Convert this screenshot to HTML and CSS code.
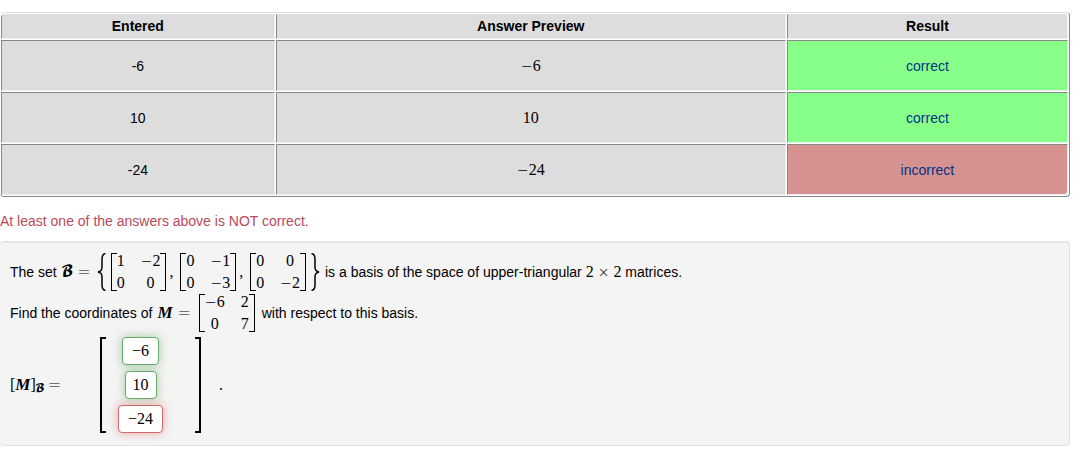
FILE: index.html
```html
<!DOCTYPE html>
<html lang="en">
<head>
  <meta charset="utf-8" />
  <meta name="viewport" content="width=device-width" />
  <title>Homework Problem</title>
  <link rel="stylesheet" href="styles.css">
</head>

<body>
  <table class="results">
    <thead>
      <tr>
        <th class="col-entered">Entered</th>
        <th class="col-preview">Answer Preview</th>
        <th>Result</th>
      </tr>
    </thead>
    <tbody>
      <tr>
        <td>-6</td>
        <td><span class="math"><span class="op">−</span>6</span></td>
        <td class="correct"><a href="#answer-1">correct</a></td>
      </tr>
      <tr>
        <td>10</td>
        <td><span class="math">10</span></td>
        <td class="correct"><a href="#answer-2">correct</a></td>
      </tr>
      <tr>
        <td>-24</td>
        <td><span class="math"><span class="op">−</span>24</span></td>
        <td class="incorrect"><a href="#answer-3">incorrect</a></td>
      </tr>
    </tbody>
  </table>

  <p class="message">At least one of the answers above is NOT correct.</p>

  <form class="problem">
    <div class="line">
      <span>The set</span>
      <span class="script">𝓑</span>
      <span class="op relation">=</span>
      <span class="set">
        <svg class="brace" viewBox="0 0 9 38" aria-hidden="true"><path d="M8.5 .5C5.5 1 5 3 5 6V14C5 17 4 18.500 1 19C4 19.500 5 21 5 24V32C5 35 5.500 37 8.500 37.500"/></svg>
        <span class="matrix math">
          <span class="cells">
            <span>1</span><span><span class="op">−</span>2</span>
            <span>0</span><span>0</span>
          </span>
        </span>
        <span class="math comma">,</span>
        <span class="matrix math">
          <span class="cells">
            <span>0</span><span><span class="op">−</span>1</span>
            <span>0</span><span><span class="op">−</span>3</span>
          </span>
        </span>
        <span class="math comma">,</span>
        <span class="matrix math">
          <span class="cells">
            <span>0</span><span>0</span>
            <span>0</span><span><span class="op">−</span>2</span>
          </span>
        </span>
        <svg class="brace" viewBox="0 0 9 38" aria-hidden="true"><path d="M.5 .5C3.500 1 4 3 4 6V14C4 17 5 18.500 8 19C5 19.500 4 21 4 24V32C4 35 3.500 37 .5 37.500"/></svg>
      </span>
      <span>is a basis of the space of upper-triangular <span class="math">2 <span class="op">×</span> 2</span> matrices.</span>
    </div>

    <div class="line">
      <span>Find the coordinates of</span>
      <span class="math variable">M</span>
      <span class="op relation">=</span>
      <span class="matrix math">
        <span class="cells">
          <span><span class="op">−</span>6</span><span>2</span>
          <span>0</span><span>7</span>
        </span>
      </span>
      <span>with respect to this basis.</span>
    </div>

    <div class="answer">
      <div class="answer-label math">[<span class="variable">M</span>]<sub class="script">𝓑</sub> <span class="op relation">=</span></div>
      <div class="matrix answer-matrix">
        <div class="fields">
          <input id="answer-1" class="field field-1 is-correct" type="text" value="−6" aria-label="answer 1">
          <input id="answer-2" class="field field-2 is-correct" type="text" value="10" aria-label="answer 2">
          <input id="answer-3" class="field field-3 is-incorrect" type="text" value="−24" aria-label="answer 3">
        </div>
      </div>
      <span class="math">.</span>
    </div>
  </form>
</body>
</html>
```
FILE: styles.css
```css
*,
*::before,
*::after {
  box-sizing: border-box;
}

body {
  margin: 0;
  padding: 12px 22px 10px 0;
  background-color: white;
  color: black;
  font-family: "Liberation Sans", Arial, sans-serif;
  font-size: 14px;
  line-height: 20px;
}

/* Results table */
.results {
  width: 100%;
  table-layout: fixed;
  border: 1px solid #888;
  border-top-color: #ddd;
  border-left: none;
  border-radius: 4px;
  border-collapse: separate;
  border-spacing: 1px;
  text-align: center;
}

.results th,
.results td {
  padding: 0;
  background-color: #ddd;
  border: 1px solid #eee;
  border-top-color: #888;
  border-left-color: #888;
}

.results th {
  height: 25px;
  padding-bottom: 1px;
  border-top-color: #ddd;
}

.results td {
  height: 51px;
}

.results .col-entered {
  width: 25.7%;
}

.results .col-preview {
  width: 47.9%;
}

.results .correct {
  background-color: #8f8;
}

.results .incorrect {
  background-color: #d69191;
}

.results th:first-child {
  border-top-left-radius: 4px;
}

.results th:last-child {
  border-top-right-radius: 4px;
}

.results tr:last-child td:last-child {
  border-bottom-right-radius: 4px;
}

.results a {
  color: #038;
  text-decoration: none;
}

.message {
  margin: 14px 0 10px;
  color: #b94a5a;
}

/* Problem text */
.problem {
  display: flex;
  flex-direction: column;
  gap: 3px;
  padding: 11px 10px 12px;
  background-color: #f4f4f4;
  border: 1px solid #e3e3e3;
  border-left: none;
  border-radius: 4px;
  box-shadow: inset 0 1px 1px rgba(0, 0, 0, 0.05);
}

.line,
.set {
  display: flex;
  align-items: center;
  gap: 5px;
}

.math {
  font-family: "Liberation Serif", "Times New Roman", serif;
  font-size: 16px;
}

.op {
  font-family: "DejaVu Sans", sans-serif;
  font-size: 14px;
  font-weight: 200;
}

.relation {
  margin-right: 1px;
  font-size: 16px;
}

.variable {
  font-size: 17px;
  font-style: italic;
  font-weight: bold;
}

.script {
  margin: 0 -1px;
  font-family: "DejaVu Math TeX Gyre", "DejaVu Serif", serif;
  font-size: 14px;
  line-height: 20px;
}

.comma {
  margin: 0 2px 0 -2px;
}

/* Square brackets stand on both sides of the cells */
.matrix {
  display: flex;
  height: 38px;
}

.matrix::before,
.matrix::after {
  content: "";
  width: 6px;
  border: 1px solid black;
}

.matrix::before {
  border-right: none;
}

.matrix::after {
  border-left: none;
}

.cells {
  display: grid;
  grid-template-columns: auto auto;
  column-gap: 16px;
  align-content: space-between;
  justify-items: center;
  line-height: 16px;
}

.line > .matrix {
  margin: 0 2px;
}

.brace {
  width: 9px;
  height: 38px;
  fill: none;
  stroke: black;
  stroke-width: 1.5;
}

/* Answer column */
.answer {
  display: flex;
  align-items: center;
  gap: 18px;
  margin-top: 2px;
}

.answer-label {
  width: 72px;
}

.answer-label sub {
  font-size: 11px;
  line-height: 0;
  vertical-align: -2px;
}

.answer-matrix {
  height: auto;
}

.answer-matrix::before,
.answer-matrix::after {
  border-width: 2px;
}

.fields {
  display: flex;
  flex-direction: column;
  align-items: center;
  gap: 6px;
  padding: 0 32px 0 12px;
}

.field {
  height: 28px;
  padding: 0;
  background-color: white;
  border: 1px solid;
  border-radius: 4px;
  font-family: "Liberation Serif", "Times New Roman", serif;
  font-size: 16px;
  text-align: center;
}

.field-1 {
  width: 37px;
}

.field-2 {
  width: 32px;
}

.field-3 {
  width: 45px;
}

.is-correct {
  border-color: #6aa86f;
  box-shadow: 0 0 10px rgba(81, 163, 81, 0.5);
}

.is-incorrect {
  border-color: #d0696c;
  box-shadow: 0 0 10px rgba(221, 85, 85, 0.5);
}
```
